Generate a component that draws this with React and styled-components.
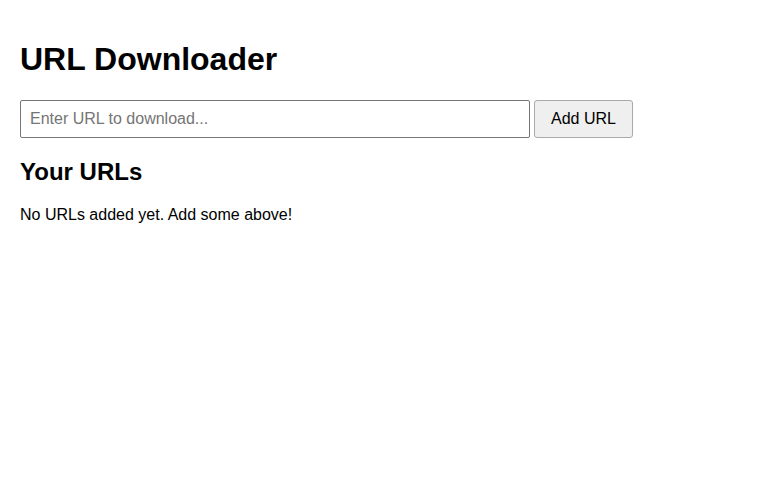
import React, { useState } from "react";
import styled, { createGlobalStyle } from "styled-components";

const Global = createGlobalStyle`
  html, body { margin: 0; padding: 0; background: #fff; }
  body { font-family: "Liberation Sans", Arial, sans-serif; color: #000; }
`;

const Page = styled.div`
  padding: 20px;
`;

const Title = styled.h1`
  font-size: 32px;
  font-weight: bold;
  margin: 21.44px 0;
`;

const Row = styled.form`
  display: flex;
  gap: 4px;
  align-items: stretch;
`;

const Input = styled.input`
  box-sizing: border-box;
  width: 510px;
  height: 38px;
  padding: 8px 9px;
  font-family: "Liberation Sans", Arial, sans-serif;
  font-size: 16px;
  border: 1px solid #767676;
  border-radius: 2px;
  outline: none;
  &::placeholder { color: #757575; }
`;

const Button = styled.button`
  box-sizing: border-box;
  height: 38px;
  width: 99px;
  padding: 8px 16px;
  font-family: "Liberation Sans", Arial, sans-serif;
  font-size: 16px;
  color: #000;
  background: #efefef;
  border: 1px solid #aaa;
  border-radius: 3px;
`;

const Subtitle = styled.h2`
  font-size: 24px;
  font-weight: bold;
  margin: 19.92px 0;
`;

const Empty = styled.p`
  font-size: 16px;
  margin: 16px 0;
`;

export default function App() {
  const [url, setUrl] = useState("");
  return (
    <Page>
      <Global />
      <Title>URL Downloader</Title>
      <Row onSubmit={(e) => e.preventDefault()}>
        <Input
          value={url}
          onChange={(e) => setUrl(e.target.value)}
          placeholder="Enter URL to download..."
        />
        <Button type="submit">Add URL</Button>
      </Row>
      <Subtitle>Your URLs</Subtitle>
      <Empty>No URLs added yet. Add some above!</Empty>
    </Page>
  );
}
